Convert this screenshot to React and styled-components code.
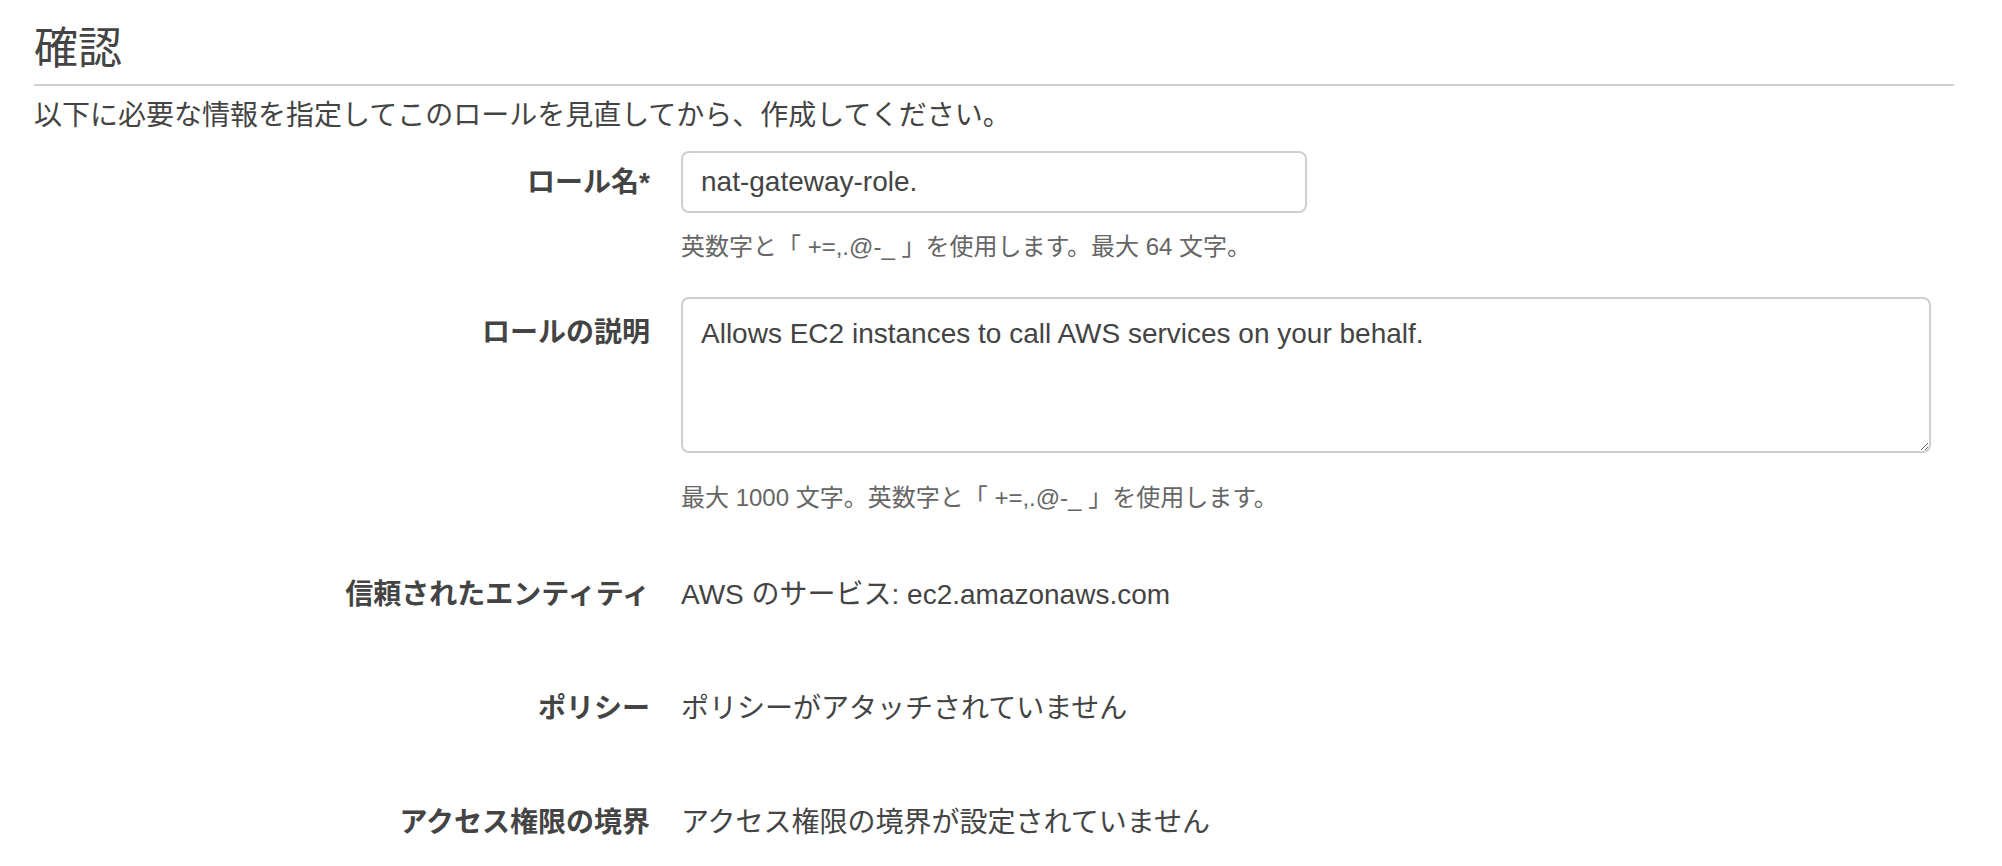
import React from 'react';
import styled, { createGlobalStyle } from 'styled-components';

const GlobalStyle = createGlobalStyle`
  html, body {
    margin: 0;
    padding: 0;
    background: #fff;
  }

  body {
    font-family: "Liberation Sans", "Noto Sans CJK JP", sans-serif;
    color: #444;
  }
`;

const Page = styled.div`
  padding: 0 48px 0 34px;
`;

const Heading = styled.h2`
  margin: 21px 0 0;
  padding-bottom: 7px;
  border-bottom: 2px solid #d0d0d0;
  font-size: 44px;
  line-height: 56px;
  font-weight: 400;
  color: #444;
`;

const Intro = styled.p`
  margin: 10px 0 0;
  font-size: 28px;
  line-height: 40px;
  color: #444;
`;

const FormRow = styled.div`
  display: grid;
  grid-template-columns: 616px 1fr;
  column-gap: 31px;
  margin-top: ${({ space }) => space}px;
`;

const Label = styled.div`
  padding-top: ${({ offset }) => offset || 0}px;
  text-align: right;
  font-size: 28px;
  line-height: 40px;
  font-weight: 700;
  color: #444;
  white-space: nowrap;
`;

const Control = styled.div`
  display: flex;
  flex-direction: column;
  align-items: flex-start;
`;

const TextInput = styled.input`
  box-sizing: border-box;
  width: 626px;
  height: 62px;
  padding: 0 18px;
  border: 2px solid #cfcfcf;
  border-radius: 8px;
  font-family: inherit;
  font-size: 28px;
  color: #444;
  background: #fff;
  outline: none;
`;

const TextArea = styled.textarea`
  box-sizing: border-box;
  width: 1250px;
  height: 156px;
  padding: 15px 18px;
  border: 2px solid #cfcfcf;
  border-radius: 8px;
  font-family: inherit;
  font-size: 28px;
  line-height: 40px;
  color: #444;
  background: #fff;
  resize: both;
  outline: none;
`;

const Hint = styled.div`
  margin-top: ${({ space }) => space}px;
  font-size: 24px;
  line-height: 34px;
  color: #666;
`;

const Value = styled.div`
  font-size: 28px;
  line-height: 40px;
  color: #444;
`;

const summary = [
  { label: '信頼されたエンティティ', value: 'AWS のサービス: ec2.amazonaws.com', space: 60 },
  { label: 'ポリシー', value: 'ポリシーがアタッチされていません', space: 74 },
  { label: 'アクセス権限の境界', value: 'アクセス権限の境界が設定されていません', space: 74 },
];

const App = () => (
  <Page>
    <GlobalStyle />
    <Heading>確認</Heading>
    <Intro>以下に必要な情報を指定してこのロールを見直してから、作成してください。</Intro>

    <FormRow space={15}>
      <Label offset={12}>ロール名*</Label>
      <Control>
        <TextInput defaultValue="nat-gateway-role." />
        <Hint space={17}>英数字と「 +=,.@-_ 」を使用します。最大 64 文字。</Hint>
      </Control>
    </FormRow>

    <FormRow space={33}>
      <Label offset={16}>ロールの説明</Label>
      <Control>
        <TextArea defaultValue="Allows EC2 instances to call AWS services on your behalf." />
        <Hint space={28}>最大 1000 文字。英数字と「 +=,.@-_ 」を使用します。</Hint>
      </Control>
    </FormRow>

    {summary.map((row) => (
      <FormRow key={row.label} space={row.space}>
        <Label>{row.label}</Label>
        <Value>{row.value}</Value>
      </FormRow>
    ))}
  </Page>
);

export default App;
